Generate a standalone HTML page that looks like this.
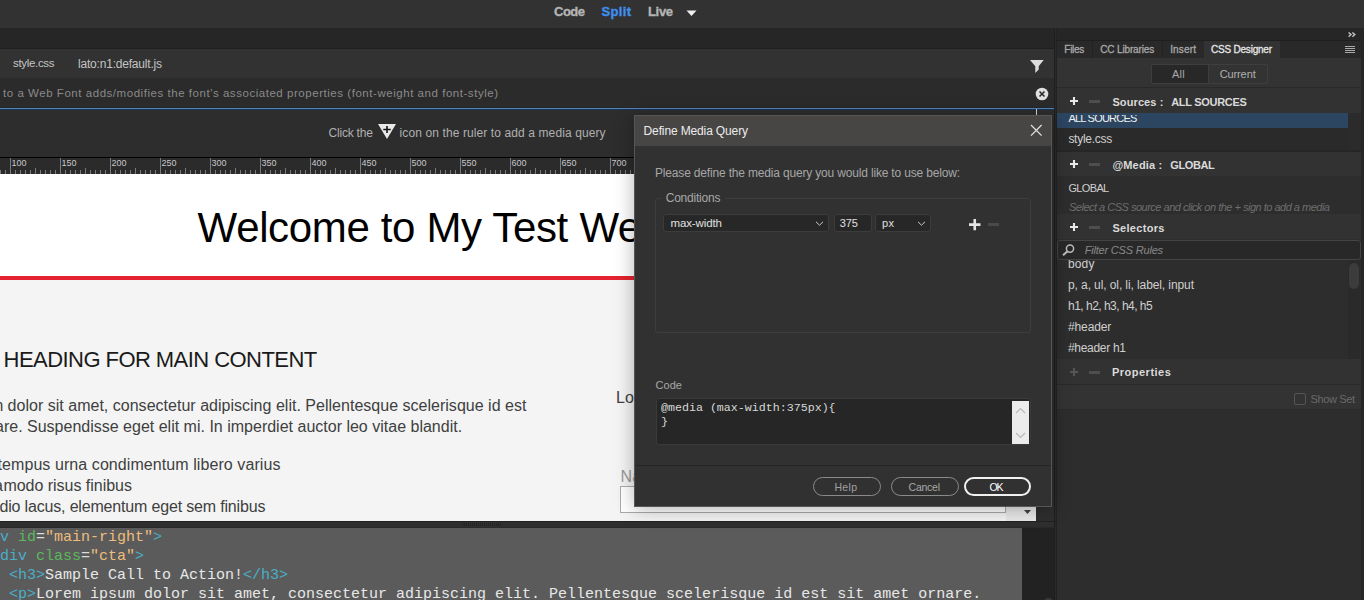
<!DOCTYPE html>
<html><head><meta charset="utf-8">
<style>
*{margin:0;padding:0;box-sizing:border-box}
html,body{width:1364px;height:600px;overflow:hidden;background:#2d2d2d;font-family:"Liberation Sans",sans-serif}
.a{position:absolute}
.t{position:absolute;white-space:pre;line-height:1}
</style></head><body>
<div class="a" style="left:0px;top:0px;width:1364px;height:28px;background:#323232;"></div>
<div class="t" style="left:554px;top:5.00px;font-size:13px;color:#b4b4b4;letter-spacing:-0.500px;font-weight:bold;-webkit-text-stroke:0.35px currentColor;">Code</div>
<div class="t" style="left:601.5px;top:5.00px;font-size:13px;color:#3f8ff0;letter-spacing:0.334px;font-weight:bold;-webkit-text-stroke:0.35px currentColor;">Split</div>
<div class="t" style="left:648px;top:5.00px;font-size:13px;color:#b4b4b4;letter-spacing:-0.338px;font-weight:bold;-webkit-text-stroke:0.35px currentColor;">Live</div>
<svg class="a" style="left:686px;top:9.8px" width="11" height="7"><path d="M0.5 0.5 L10.5 0.5 L5.5 6 Z" fill="#eee"/></svg>
<div class="a" style="left:0px;top:28px;width:1054px;height:20px;background:#262626;"></div>
<div class="a" style="left:0px;top:48px;width:1054px;height:1px;background:#202020;"></div>
<div class="a" style="left:0px;top:49px;width:1054px;height:29px;background:#323232;"></div>
<div class="t" style="left:13px;top:58.27px;font-size:11.5px;color:#c4c4c4;letter-spacing:-0.324px;">style.css</div>
<div class="t" style="left:78px;top:57.84px;font-size:12px;color:#c4c4c4;letter-spacing:-0.200px;">lato:n1:default.js</div>
<svg class="a" style="left:1029.5px;top:60px" width="14" height="14"><path d="M0 0 H13.7 L8.7 6.2 V9.6 L5.3 13 V6.2 Z" fill="#dcdcdc"/></svg>
<div class="a" style="left:0px;top:78px;width:1054px;height:30px;background:#2b2b2b;"></div>
<div class="t" style="left:3px;top:88.17px;font-size:11.5px;color:#8a8a8a;letter-spacing:0.540px;">to a Web Font adds/modifies the font&#x27;s associated properties (font-weight and font-style)</div>
<svg class="a" style="left:1035px;top:87px" width="14" height="14"><circle cx="7" cy="7" r="6.3" fill="#e0e0e0"/><path d="M4.5 4.5 L9.5 9.5 M9.5 4.5 L4.5 9.5" stroke="#2b2b2b" stroke-width="1.6"/></svg>
<div class="a" style="left:0px;top:107px;width:1054px;height:1px;background:#23282e;"></div>
<div class="a" style="left:0px;top:108px;width:1054px;height:1px;background:#5a82b0;"></div>
<div class="a" style="left:0px;top:109px;width:1054px;height:1px;background:#14345a;"></div>
<div class="a" style="left:0px;top:110px;width:1054px;height:47px;background:#2d2d2d;"></div>
<div class="t" style="left:328.5px;top:126.84px;font-size:12px;color:#b0b0b0;letter-spacing:-0.202px;">Click the</div>
<svg class="a" style="left:377px;top:124px" width="20" height="15"><path d="M1 0 H19 L10 15 Z" fill="#e8e8e8"/><path d="M10 2 V9 M6.3 5.5 H13.7" stroke="#151515" stroke-width="1.6"/></svg>
<div class="t" style="left:399.6px;top:126.84px;font-size:12px;color:#b0b0b0;letter-spacing:0.105px;">icon on the ruler to add a media query</div>
<div class="a" style="left:0px;top:157px;width:1054px;height:1px;background:#000;"></div>
<svg class="a" style="left:0;top:158px;background:#2b2b2b" width="1054" height="16" font-family="Liberation Sans" font-size="9" fill="#c8c8c8">
<path d="M0.5 12V16M5.5 12V16M10.5 0V16M15.5 12V16M20.5 12V16M25.5 12V16M30.5 12V16M35.5 10V16M40.5 12V16M45.5 12V16M50.5 12V16M55.5 12V16M60.5 0V16M65.5 12V16M70.5 12V16M75.5 12V16M80.5 12V16M85.5 10V16M90.5 12V16M95.5 12V16M100.5 12V16M105.5 12V16M110.5 0V16M115.5 12V16M120.5 12V16M125.5 12V16M130.5 12V16M135.5 10V16M140.5 12V16M145.5 12V16M150.5 12V16M155.5 12V16M160.5 0V16M165.5 12V16M170.5 12V16M175.5 12V16M180.5 12V16M185.5 10V16M190.5 12V16M195.5 12V16M200.5 12V16M205.5 12V16M210.5 0V16M215.5 12V16M220.5 12V16M225.5 12V16M230.5 12V16M235.5 10V16M240.5 12V16M245.5 12V16M250.5 12V16M255.5 12V16M260.5 0V16M265.5 12V16M270.5 12V16M275.5 12V16M280.5 12V16M285.5 10V16M290.5 12V16M295.5 12V16M300.5 12V16M305.5 12V16M310.5 0V16M315.5 12V16M320.5 12V16M325.5 12V16M330.5 12V16M335.5 10V16M340.5 12V16M345.5 12V16M350.5 12V16M355.5 12V16M360.5 0V16M365.5 12V16M370.5 12V16M375.5 12V16M380.5 12V16M385.5 10V16M390.5 12V16M395.5 12V16M400.5 12V16M405.5 12V16M410.5 0V16M415.5 12V16M420.5 12V16M425.5 12V16M430.5 12V16M435.5 10V16M440.5 12V16M445.5 12V16M450.5 12V16M455.5 12V16M460.5 0V16M465.5 12V16M470.5 12V16M475.5 12V16M480.5 12V16M485.5 10V16M490.5 12V16M495.5 12V16M500.5 12V16M505.5 12V16M510.5 0V16M515.5 12V16M520.5 12V16M525.5 12V16M530.5 12V16M535.5 10V16M540.5 12V16M545.5 12V16M550.5 12V16M555.5 12V16M560.5 0V16M565.5 12V16M570.5 12V16M575.5 12V16M580.5 12V16M585.5 10V16M590.5 12V16M595.5 12V16M600.5 12V16M605.5 12V16M610.5 0V16M615.5 12V16M620.5 12V16M625.5 12V16M630.5 12V16M635.5 10V16M640.5 12V16M645.5 12V16M650.5 12V16M655.5 12V16M660.5 0V16M665.5 12V16M670.5 12V16M675.5 12V16M680.5 12V16M685.5 10V16M690.5 12V16M695.5 12V16M700.5 12V16M705.5 12V16M710.5 0V16M715.5 12V16M720.5 12V16M725.5 12V16M730.5 12V16M735.5 10V16M740.5 12V16M745.5 12V16M750.5 12V16M755.5 12V16M760.5 0V16M765.5 12V16M770.5 12V16M775.5 12V16M780.5 12V16M785.5 10V16M790.5 12V16M795.5 12V16M800.5 12V16M805.5 12V16M810.5 0V16M815.5 12V16M820.5 12V16M825.5 12V16M830.5 12V16M835.5 10V16M840.5 12V16M845.5 12V16M850.5 12V16M855.5 12V16M860.5 0V16M865.5 12V16M870.5 12V16M875.5 12V16M880.5 12V16M885.5 10V16M890.5 12V16M895.5 12V16M900.5 12V16M905.5 12V16M910.5 0V16M915.5 12V16M920.5 12V16M925.5 12V16M930.5 12V16M935.5 10V16M940.5 12V16M945.5 12V16M950.5 12V16M955.5 12V16M960.5 0V16M965.5 12V16M970.5 12V16M975.5 12V16M980.5 12V16M985.5 10V16M990.5 12V16M995.5 12V16M1000.5 12V16M1005.5 12V16M1010.5 0V16M1015.5 12V16M1020.5 12V16M1025.5 12V16M1030.5 12V16M1035.5 10V16M1040.5 12V16M1045.5 12V16M1050.5 12V16" stroke="#7a7a7a" stroke-width="1"/>
<text x="11.5" y="8.3">100</text>
<text x="61.5" y="8.3">150</text>
<text x="111.5" y="8.3">200</text>
<text x="161.5" y="8.3">250</text>
<text x="211.5" y="8.3">300</text>
<text x="261.5" y="8.3">350</text>
<text x="311.5" y="8.3">400</text>
<text x="361.5" y="8.3">450</text>
<text x="411.5" y="8.3">500</text>
<text x="461.5" y="8.3">550</text>
<text x="511.5" y="8.3">600</text>
<text x="561.5" y="8.3">650</text>
<text x="611.5" y="8.3">700</text>
<text x="661.5" y="8.3">750</text>
<text x="711.5" y="8.3">800</text>
<text x="761.5" y="8.3">850</text>
<text x="811.5" y="8.3">900</text>
<text x="861.5" y="8.3">950</text>
<text x="911.5" y="8.3">1000</text>
<text x="961.5" y="8.3">1050</text>
<text x="1011.5" y="8.3">1100</text>
</svg>
<div class="a" style="left:0;top:174px;width:1036px;height:347px;background:#f4f4f4;overflow:hidden">
<div class="a" style="left:0px;top:0px;width:1036px;height:102px;background:#fff;"></div>
<div class="a" style="left:0px;top:102px;width:1036px;height:4px;background:#e42230;"></div>
<div class="t" style="left:197.6px;top:32.65px;font-size:42px;color:#000;letter-spacing:-0.348px;">Welcome to My Test</div>
<div class="t" style="left:579.5px;top:32.65px;font-size:42px;color:#000;letter-spacing:-0.6px;">Website</div>
<div class="t" style="left:3.6px;top:175.38px;font-size:22px;color:#1a1a1a;letter-spacing:-0.554px;">HEADING FOR MAIN CONTENT</div>
<div class="t" style="left:-10px;top:224.36px;font-size:16px;color:#404040;">m</div>
<div class="t" style="left:7.6px;top:224.36px;font-size:16px;color:#404040;letter-spacing:0.016px;">dolor sit amet, consectetur adipiscing elit. Pellentesque scelerisque id est</div>
<div class="t" style="left:-5px;top:245.06px;font-size:16px;color:#404040;">are.</div>
<div class="t" style="left:27px;top:245.06px;font-size:16px;color:#404040;letter-spacing:0.003px;">Suspendisse eget elit mi. In imperdiet auctor leo vitae blandit.</div>
<div class="t" style="left:-2.5px;top:282.96px;font-size:16px;color:#404040;letter-spacing:0.077px;">tempus urna condimentum libero varius</div>
<div class="t" style="left:-6px;top:303.76px;font-size:16px;color:#404040;">a</div>
<div class="t" style="left:3.4px;top:303.76px;font-size:16px;color:#404040;letter-spacing:-0.020px;">modo risus finibus</div>
<div class="t" style="left:-0.5px;top:324.86px;font-size:16px;color:#404040;letter-spacing:-0.173px;">dio lacus, elementum eget sem finibus</div>
<div class="t" style="left:616px;top:216.06px;font-size:16px;color:#404040;">Lorem</div>
<div class="t" style="left:620.6px;top:295.46px;font-size:16px;color:#999;">Name</div>
<div class="a" style="left:620px;top:312px;width:386px;height:27px;background:#fff;border:1px solid #aaa"></div>
<div class="a" style="left:1006px;top:312px;width:30px;height:35px;background:#e9e9e9;"></div>
<svg class="a" style="left:1024px;top:336px" width="8" height="5"><path d="M0 0 H7 L3.5 4 Z" fill="#444"/></svg>
</div>
<div class="a" style="left:1036px;top:110px;width:18px;height:418px;background:#2e2e2e;"></div>
<div class="a" style="left:1036px;top:109px;width:1px;height:6px;background:#d8d8d8;"></div>
<div class="a" style="left:0px;top:521px;width:1054px;height:7px;background:#2f2f2f;"></div>
<div class="a" style="left:0px;top:521px;width:1054px;height:1px;background:#212121;"></div>
<div class="a" style="left:0px;top:527px;width:1054px;height:1px;background:#292929;"></div>
<div class="a" style="left:462px;top:523px;width:40px;height:3px;background:transparent;background:repeating-linear-gradient(90deg,#242424 0 1px,transparent 1px 2px)"></div>
<div class="a" style="left:0px;top:528px;width:1022px;height:72px;background:#5b5b5b;"></div>
<div class="a" style="left:1022px;top:528px;width:32px;height:72px;background:#222;"></div>
<div class="a" style="left:1044px;top:597.8px;width:8.5px;height:10px;background:#3a3a3a;border-radius:4.25px"></div>
<div class="a" style="left:0;top:528px;width:1022px;height:72px;overflow:hidden;font-family:'Liberation Mono',monospace;font-size:15px;line-height:1">
<div class="a" style="left:-27px;top:2.10px;white-space:pre"><span style="color:#4aaec8">&lt;div</span><span style="color:#e8e8e8"> </span><span style="color:#5cb85c">id</span><span style="color:#dcdcdc">=</span><span style="color:#eebd7e">&quot;main-right&quot;</span><span style="color:#4aaec8">&gt;</span></div>
<div class="a" style="left:-9px;top:21.00px;white-space:pre"><span style="color:#4aaec8">&lt;div</span><span style="color:#e8e8e8"> </span><span style="color:#5cb85c">class</span><span style="color:#dcdcdc">=</span><span style="color:#eebd7e">&quot;cta&quot;</span><span style="color:#4aaec8">&gt;</span></div>
<div class="a" style="left:9px;top:40.10px;white-space:pre"><span style="color:#4aaec8">&lt;h3&gt;</span><span style="color:#e8e8e8">Sample Call to Action!</span><span style="color:#4aaec8">&lt;/h3&gt;</span></div>
<div class="a" style="left:9px;top:59.00px;white-space:pre"><span style="color:#4aaec8">&lt;p&gt;</span><span style="color:#e8e8e8">Lorem ipsum dolor sit amet, consectetur adipiscing elit. Pellentesque scelerisque id est sit amet ornare.</span></div>
</div>
<div class="a" style="left:1054px;top:28px;width:3px;height:572px;background:#2a2a2a;"></div>
<div class="a" style="left:1054px;top:28px;width:1px;height:572px;background:#1e1e1e;"></div>
<div class="a" style="left:1056px;top:28px;width:1px;height:572px;background:#222;"></div>
<div class="a" style="left:1057px;top:28px;width:307px;height:572px;background:#2d2d2d;"></div>
<div class="a" style="left:1361px;top:28px;width:3px;height:572px;background:#262626;"></div>
<div class="a" style="left:1057px;top:28px;width:304px;height:13px;background:#262626;"></div>
<svg class="a" style="left:1347.5px;top:32px" width="9" height="6"><path d="M0.6 0.5 L3 2.6 L0.6 4.7 M4.4 0.5 L6.8 2.6 L4.4 4.7" fill="none" stroke="#bbb" stroke-width="1.5"/></svg>
<div class="a" style="left:1057px;top:40px;width:304px;height:1px;background:#1f1f1f;"></div>
<div class="a" style="left:1057px;top:41px;width:304px;height:17px;background:#292929;"></div>
<div class="a" style="left:1092px;top:41px;width:1px;height:17px;background:#222;"></div>
<div class="a" style="left:1162px;top:41px;width:1px;height:17px;background:#222;"></div>
<div class="a" style="left:1204px;top:41px;width:76px;height:17px;background:#333;"></div>
<div class="t" style="left:1064.3px;top:44.53px;font-size:10px;color:#a8a8a8;letter-spacing:-0.278px;-webkit-text-stroke:0.3px currentColor;">Files</div>
<div class="t" style="left:1100.2px;top:44.53px;font-size:10px;color:#a8a8a8;letter-spacing:-0.143px;-webkit-text-stroke:0.3px currentColor;">CC Libraries</div>
<div class="t" style="left:1170.2px;top:44.53px;font-size:10px;color:#a8a8a8;letter-spacing:0.158px;-webkit-text-stroke:0.3px currentColor;">Insert</div>
<div class="t" style="left:1211px;top:44.53px;font-size:10px;color:#e6e6e6;letter-spacing:-0.214px;-webkit-text-stroke:0.3px currentColor;">CSS Designer</div>
<svg class="a" style="left:1345px;top:46px" width="10" height="8"><path d="M0 0.5H10M0 2.5H10M0 4.5H10M0 6.5H10" stroke="#aaa" stroke-width="1"/></svg>
<div class="a" style="left:1057px;top:58px;width:304px;height:30px;background:#333;"></div>
<div class="a" style="left:1057px;top:87px;width:304px;height:1px;background:#292929;"></div>
<div class="a" style="left:1151px;top:64px;width:117px;height:20px;background:#333;border:1px solid #3e3e3e;border-radius:2px"></div>
<div class="a" style="left:1151px;top:64px;width:58px;height:20px;background:#282828;border:1px solid #3e3e3e;border-radius:2px 0 0 2px"></div>
<div class="t" style="left:1172px;top:68.69px;font-size:11px;color:#a8a8a8;letter-spacing:0.238px;">All</div>
<div class="t" style="left:1219.7px;top:68.69px;font-size:11px;color:#b0b0b0;letter-spacing:-0.113px;">Current</div>
<div class="a" style="left:1057px;top:88px;width:304px;height:25px;background:#323232;"></div>
<svg class="a" style="left:1070px;top:97px" width="9" height="9"><path d="M4 0V8M0 4H8" stroke="#e8e8e8" stroke-width="2.1"/></svg><div class="a" style="left:1089px;top:100px;width:11px;height:3px;background:#4e4e4e;"></div>
<div class="t" style="left:1112.4px;top:96.79px;font-size:11px;color:#dadada;letter-spacing:0.109px;font-weight:bold;">Sources :</div>
<div class="t" style="left:1171.2px;top:96.79px;font-size:11px;color:#dadada;letter-spacing:-0.304px;font-weight:bold;">ALL SOURCES</div>
<div class="a" style="left:1057px;top:113px;width:304px;height:37px;background:#2a2a2a;"></div>
<div class="a" style="left:1348px;top:113px;width:12px;height:37px;background:#2b2b2b;"></div>
<div class="a" style="left:1057px;top:113px;width:291px;height:15px;background:#2c4561;"></div>
<div class="a" style="left:1057px;top:115px;width:291px;height:35px;overflow:hidden">
<div class="t" style="left:11.4px;top:-2.31px;font-size:11px;color:#f0f0f0;letter-spacing:-0.763px;">ALL SOURCES</div>
<div class="t" style="left:11.4px;top:18.24px;font-size:12px;color:#d0d0d0;letter-spacing:-0.276px;">style.css</div>
</div>
<div class="a" style="left:1057px;top:150px;width:304px;height:2px;background:#262626;"></div>
<div class="a" style="left:1057px;top:152px;width:304px;height:24px;background:#323232;"></div>
<svg class="a" style="left:1070px;top:160px" width="9" height="9"><path d="M4 0V8M0 4H8" stroke="#e8e8e8" stroke-width="2.1"/></svg><div class="a" style="left:1089px;top:163px;width:11px;height:3px;background:#4e4e4e;"></div>
<div class="t" style="left:1112.4px;top:159.69px;font-size:11px;color:#dadada;letter-spacing:0.169px;font-weight:bold;">@Media :</div>
<div class="t" style="left:1170.3px;top:159.69px;font-size:11px;color:#dadada;letter-spacing:-0.408px;font-weight:bold;">GLOBAL</div>
<div class="a" style="left:1057px;top:176px;width:304px;height:39px;background:#2d2d2d;"></div>
<div class="t" style="left:1068.4px;top:183.09px;font-size:11px;color:#d0d0d0;letter-spacing:-0.644px;">GLOBAL</div>
<div class="t" style="left:1069px;top:201.99px;font-size:11px;color:#6e6e6e;letter-spacing:-0.501px;font-style:italic;">Select a CSS source and click on the + sign to add a media</div>
<div class="a" style="left:1057px;top:214px;width:304px;height:25px;background:#323232;"></div>
<svg class="a" style="left:1070px;top:223px" width="9" height="9"><path d="M4 0V8M0 4H8" stroke="#e8e8e8" stroke-width="2.1"/></svg><div class="a" style="left:1089px;top:226px;width:11px;height:3px;background:#4e4e4e;"></div>
<div class="t" style="left:1112.4px;top:222.79px;font-size:11px;color:#dadada;letter-spacing:0.309px;font-weight:bold;">Selectors</div>
<div class="a" style="left:1057px;top:239px;width:304px;height:120px;background:#2d2d2d;"></div>
<div class="a" style="left:1057px;top:240.3px;width:304px;height:19.5px;background:#282828;border:1px solid #444;border-radius:3px"></div>
<svg class="a" style="left:1062px;top:244px" width="13" height="12"><circle cx="8" cy="4.6" r="3.6" fill="none" stroke="#bbb" stroke-width="1.5"/><path d="M5.5 7.2 L1 11.3" stroke="#bbb" stroke-width="2"/></svg>
<div class="t" style="left:1084.7px;top:245.09px;font-size:11px;color:#8a8a8a;letter-spacing:-0.193px;font-style:italic;">Filter CSS Rules</div>
<div class="a" style="left:1057px;top:260px;width:291px;height:99px;overflow:hidden">
<div class="t" style="left:11px;top:-1.86px;font-size:12px;color:#cfcfcf;letter-spacing:0.126px;">body</div>
<div class="t" style="left:11px;top:18.84px;font-size:12px;color:#cfcfcf;letter-spacing:-0.095px;">p, a, ul, ol, li, label, input</div>
<div class="t" style="left:11px;top:39.54px;font-size:12px;color:#cfcfcf;letter-spacing:-0.512px;">h1, h2, h3, h4, h5</div>
<div class="t" style="left:11px;top:61.14px;font-size:12px;color:#cfcfcf;letter-spacing:-0.123px;">#header</div>
<div class="t" style="left:11px;top:82.14px;font-size:12px;color:#cfcfcf;letter-spacing:-0.302px;">#header h1</div>
</div>
<div class="a" style="left:1348px;top:260px;width:12px;height:99px;background:#2a2a2a;"></div>
<div class="a" style="left:1349px;top:263px;width:10px;height:26px;background:#3c3c3c;border-radius:5px"></div>
<div class="a" style="left:1057px;top:359px;width:304px;height:25px;background:#323232;"></div>
<svg class="a" style="left:1070px;top:368px" width="9" height="9"><path d="M4 0V8M0 4H8" stroke="#555" stroke-width="2.1"/></svg><div class="a" style="left:1089px;top:371px;width:11px;height:3px;background:#4e4e4e;"></div>
<div class="t" style="left:1112px;top:367.29px;font-size:11px;color:#dadada;letter-spacing:0.488px;font-weight:bold;">Properties</div>
<div class="a" style="left:1057px;top:384px;width:304px;height:25px;background:#333;"></div>
<div class="a" style="left:1057px;top:384px;width:304px;height:1px;background:#292929;"></div>
<div class="a" style="left:1057px;top:409px;width:304px;height:1px;background:#2a2a2a;"></div>
<div class="a" style="left:1294px;top:393px;width:12px;height:12px;background:transparent;border:1px solid #555;border-radius:2px"></div>
<div class="t" style="left:1310.5px;top:393.89px;font-size:11px;color:#6a6a6a;letter-spacing:-0.369px;">Show Set</div>
<div class="a" style="left:634px;top:115px;width:418px;height:392px;background:#313131;border:1px solid #565656;box-shadow:0 2px 18px rgba(0,0,0,0.3)"></div>
<div class="a" style="left:635px;top:116px;width:416px;height:30px;background:#474645;"></div>
<div class="t" style="left:643.6px;top:124.84px;font-size:12px;color:#ececec;letter-spacing:-0.136px;">Define Media Query</div>
<svg class="a" style="left:1030px;top:124px" width="13" height="13"><path d="M1 1L11.6 11.6M11.6 1L1 11.6" stroke="#e0e0e0" stroke-width="1.3"/></svg>
<div class="t" style="left:655px;top:166.84px;font-size:12px;color:#a6a6a6;letter-spacing:-0.173px;">Please define the media query you would like to use below:</div>
<div class="a" style="left:655px;top:198px;width:376px;height:134.5px;background:transparent;border:1px solid #3d3d3d;border-radius:3px"></div>
<div class="a" style="left:662px;top:194px;width:63px;height:8px;background:#313131;"></div>
<div class="t" style="left:665.7px;top:191.84px;font-size:12px;color:#a8a8a8;letter-spacing:-0.222px;">Conditions</div>
<div class="a" style="left:663px;top:214px;width:165.5px;height:18px;background:#272727;border:1px solid #3c3c3c;border-radius:3px"></div>
<div class="t" style="left:670.5px;top:217.57px;font-size:11.5px;color:#e0e0e0;letter-spacing:-0.125px;">max-width</div>
<svg class="a" style="left:815.2px;top:220.5px" width="9" height="5"><path d="M1 0.8L4.5 4.2L8 0.8" fill="none" stroke="#cfcfcf" stroke-width="1"/></svg>
<div class="a" style="left:834px;top:214px;width:38px;height:18px;background:#272727;border:1px solid #3c3c3c;border-radius:3px"></div>
<div class="t" style="left:839.7px;top:218.19px;font-size:11px;color:#e0e0e0;letter-spacing:-0.027px;">375</div>
<div class="a" style="left:875px;top:214px;width:56px;height:18px;background:#272727;border:1px solid #3c3c3c;border-radius:3px"></div>
<div class="t" style="left:882px;top:218.19px;font-size:11px;color:#e0e0e0;letter-spacing:0.382px;">px</div>
<svg class="a" style="left:917.2px;top:220.5px" width="9" height="5"><path d="M1 0.8L4.5 4.2L8 0.8" fill="none" stroke="#cfcfcf" stroke-width="1"/></svg>
<svg class="a" style="left:968.5px;top:219px" width="12" height="12"><path d="M5.75 0V11.2M0 5.6H11.5" stroke="#e4e4e4" stroke-width="2.6"/></svg>
<div class="a" style="left:987.7px;top:223px;width:11.3px;height:3px;background:#4a4a4a;"></div>
<div class="t" style="left:655.6px;top:379.99px;font-size:11px;color:#a8a8a8;letter-spacing:0.034px;">Code</div>
<div class="a" style="left:655.5px;top:398px;width:375.5px;height:46.5px;background:#262626;border:1px solid #3a3a3a;border-radius:3px"></div>
<div class="t" style="left:661px;top:403.05px;font-size:11.67px;color:#d8d8d8;letter-spacing:-0.011px;font-family:'Liberation Mono',monospace;">@media (max-width:375px){</div>
<div class="t" style="left:661px;top:417.25px;font-size:11.67px;color:#d8d8d8;font-family:'Liberation Mono',monospace;">}</div>
<div class="a" style="left:1012px;top:401px;width:17px;height:43px;background:#ececec;"></div>
<svg class="a" style="left:1015px;top:406px" width="11" height="34"><path d="M1 7L5.5 2.5L10 7M1 27L5.5 31.5L10 27" fill="none" stroke="#b8b8b8" stroke-width="1.2"/></svg>
<div class="a" style="left:635px;top:465px;width:416px;height:1px;background:#262626;"></div>
<div class="a" style="left:813px;top:477px;width:68px;height:19px;background:transparent;border:1px solid #8a8a8a;border-radius:10px"></div><div class="t" style="left:834.4px;top:481.81px;font-size:10.5px;color:#a0a0a0;letter-spacing:0.335px;">Help</div>
<div class="a" style="left:891px;top:477px;width:68px;height:19px;background:transparent;border:1px solid #8a8a8a;border-radius:10px"></div><div class="t" style="left:908.6px;top:481.81px;font-size:10.5px;color:#a8a8a8;letter-spacing:-0.257px;">Cancel</div>
<div class="a" style="left:963.5px;top:477px;width:67.5px;height:19px;background:transparent;border:2px solid #f0f0f0;border-radius:10px"></div><div class="t" style="left:989.6px;top:481.81px;font-size:10.5px;color:#ffffff;letter-spacing:-1.171px;">OK</div>
</body></html>
